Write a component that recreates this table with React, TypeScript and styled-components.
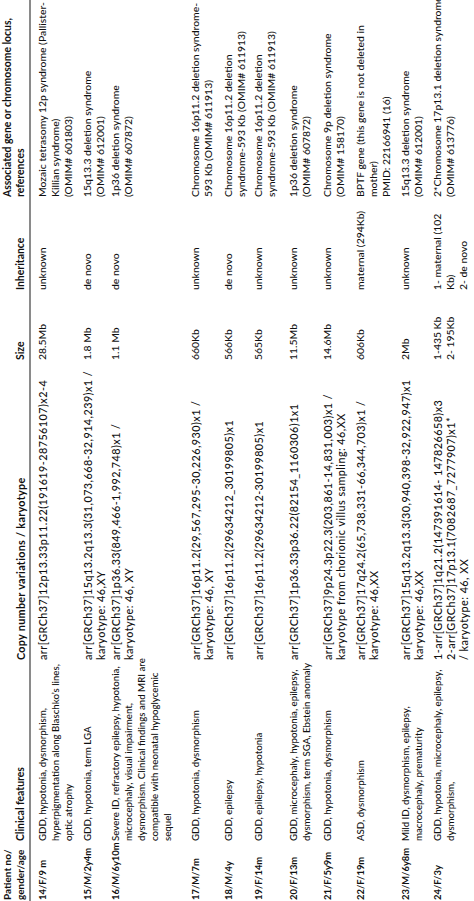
import React from "react";
import styled, { createGlobalStyle } from "styled-components";

const GlobalStyle = createGlobalStyle`
  html, body {
    margin: 0;
    padding: 0;
    background: #ffffff;
  }
`;

const Page = styled.div`
  width: 474px;
  height: 901px;
  overflow: hidden;
  background: #ffffff;
`;

// the table is printed sideways: laid out upright, then turned a quarter to the left
const Sideways = styled.div`
  width: 901px;
  height: 474px;
  transform-origin: 0 0;
  transform: translateY(901px) rotate(-90deg);
  font-family: Lato, "Liberation Sans", sans-serif;
  font-size: 10.4px;
  font-weight: 500;
  line-height: 13px;
  color: #111111;
`;

const Row = styled.div<{ $h?: number; $pad?: number; $head?: boolean }>`
  display: grid;
  grid-template-columns: 60px 181px 300px 70px 93px 320px;
  box-sizing: border-box;
  height: ${(p) => (p.$h ? `${p.$h}px` : "auto")};
  padding-top: ${(p) => p.$pad ?? 2}px;
  border-bottom: ${(p) => (p.$head ? "2px solid #8a8a8a" : "none")};
`;

const Cell = styled.div<{ $size?: number; $track?: number }>`
  white-space: nowrap;
  font-size: ${(p) => p.$size ?? 10.4}px;
  letter-spacing: ${(p) => p.$track ?? 0}px;
`;

const IdCell = styled(Cell)`
  font-weight: 700;
  padding-left: 1px;
`;

const HeadCell = styled(Cell)`
  font-weight: 700;
  align-self: end;
  padding-bottom: 2px;
`;

type Entry = {
  id: string;
  clin: string[];
  cnv: string[];
  size: string[];
  inh: string[];
  assoc: string[];
  h?: number;
  pad?: number;
};

const rows: Entry[] = [
  {
    id: "14/F/9 m",
    clin: ["GDD, hypotonia, dysmorphism,", "hyperpigmentation along Blaschko\u2019s lines,", "optic atrophy"],
    cnv: ["arr[GRCh37]12p13.33p11.22(191619-28756107)x2-4"],
    size: ["28.5Mb"],
    inh: ["unknown"],
    assoc: ["Mozaic tetrasomy 12p syndrome (Pallister-", "Killian syndrome)", "(OMIM# 601803)"],
    h: 47.5,
    pad: 4.5,
  },
  {
    id: "15/M/2y4m",
    clin: ["GDD, hypotonia, term LGA"],
    cnv: ["arr[GRCh37]15q13.2q13.3(31,073,668-32,914,239)x1 /", "karyotype: 46,XY"],
    size: ["1.8 Mb"],
    inh: ["de novo"],
    assoc: ["15q13.3 deletion syndrome", "(OMIM# 612001)"],
    h: 28,
  },
  {
    id: "16/M/6y10m",
    clin: [
      "Severe ID, refractory epilepsy, hypotonia,",
      "microcephaly, visual impairment,",
      "dysmorphism. Clinical findings and MRI are",
      "compatible with neonatal hypoglycemic",
      "sequel",
    ],
    cnv: ["arr[GRCh37]1p36.33(849,466-1,992,748)x1 /", "karyotype: 46, XY"],
    size: ["1.1 Mb"],
    inh: ["de novo"],
    assoc: ["1p36 deletion syndrome", "(OMIM# 607872)"],
    h: 80,
  },
  {
    id: "17/M/7m",
    clin: ["GDD, hypotonia, dysmorphism"],
    cnv: ["arr[GRCh37]16p11.2(29,567,295-30,226,930)x1 /", "karyotype: 46, XY"],
    size: ["660Kb"],
    inh: ["unknown"],
    assoc: ["Chromosome 16p11.2 deletion syndrome-", "593 Kb (OMIM# 611913)"],
    h: 33,
  },
  {
    id: "18/M/4y",
    clin: ["GDD, epilepsy"],
    cnv: ["arr[GRCh37]16p11.2(29634212_30199805)x1"],
    size: ["566Kb"],
    inh: ["de novo"],
    assoc: ["Chromosome 16p11.2 deletion", "syndrome-593 Kb (OMIM# 611913)"],
    h: 30,
  },
  {
    id: "19/F/14m",
    clin: ["GDD, epilepsy, hypotonia"],
    cnv: ["arr[GRCh37]16p11.2(29634212-30199805)x1"],
    size: ["565Kb"],
    inh: ["unknown"],
    assoc: ["Chromosome 16p11.2 deletion", "syndrome-593 Kb (OMIM# 611913)"],
    h: 35,
  },
  {
    id: "20/F/13m",
    clin: ["GDD, microcephaly, hypotonia, epilepsy,", "dysmorphism, term SGA, Ebstein anomaly"],
    cnv: ["arr[GRCh37]1p36.33p36.22(82154_1160306)1x1"],
    size: ["11.5Mb"],
    inh: ["unknown"],
    assoc: ["1p36 deletion syndrome", "(OMIM# 607872)"],
    h: 34,
  },
  {
    id: "21/F/5y9m",
    clin: ["GDD, hypotonia, dysmorphism"],
    cnv: ["arr[GRCh37]9p24.3p22.3(203,861-14,831,003)x1 /", "karyotype from chorionic villus sampling: 46,XX"],
    size: ["14.6Mb"],
    inh: ["unknown"],
    assoc: ["Chromosome 9p deletion syndrome", "(OMIM# 158170)"],
    h: 33,
  },
  {
    id: "22/F/19m",
    clin: ["ASD, dysmorphism"],
    cnv: ["arr[GRCh37]17q24.2(65,738,331-66,344,703)x1 /", "karyotype: 46,XX"],
    size: ["606Kb"],
    inh: ["maternal (294Kb)"],
    assoc: ["BPTF gene (this gene is not deleted in", "mother)", "PMID: 22166941 (16)"],
    h: 45,
  },
  {
    id: "23/M/6y8m",
    clin: ["Mild ID, dysmorphism, epilepsy,", "macrocephaly, prematurity"],
    cnv: ["arr[GRCh37]15q13.2q13.3(30,940,398-32,922,947)x1", "karyotype: 46,XX"],
    size: ["2Mb"],
    inh: ["unknown"],
    assoc: ["15q13.3 deletion syndrome", "(OMIM# 612001)"],
    h: 32,
  },
  {
    id: "24/F/3y",
    clin: ["GDD, hypotonia, microcephaly, epilepsy,", "dysmorphism,"],
    cnv: [
      "1-arr[GRCh37]1q21.2(147391614- 147826658)x3",
      "2-arr[GRCh37]17p13.1(7082687_7277907)x1*",
      "/ karyotype: 46, XX",
    ],
    size: ["1-435 Kb", "2- 195Kb"],
    inh: ["1- maternal (102", "Kb)", "2- de novo"],
    assoc: ["2*Chromosome 17p13.1 deletion syndrome", "(OMIM# 613776)"],
  },
];

const Lines = ({ items }: { items: string[] }) => (
  <>
    {items.map((t, i) => (
      <React.Fragment key={i}>
        {i > 0 && <br />}
        {t}
      </React.Fragment>
    ))}
  </>
);

export default function App() {
  return (
    <Page>
      <GlobalStyle />
      <Sideways>
        <Row $h={31} $pad={0} $head>
          <HeadCell $size={10} style={{ paddingLeft: 1 }}>
            Patient no/
            <br />
            gender/age
          </HeadCell>
          <HeadCell>Clinical features</HeadCell>
          <HeadCell $size={10.8} $track={0.3}>
            Copy number variations / karyotype
          </HeadCell>
          <HeadCell>Size</HeadCell>
          <HeadCell>Inheritance</HeadCell>
          <HeadCell>
            Associated gene or chromosome locus,
            <br />
            references
          </HeadCell>
        </Row>
        {rows.map((r) => (
          <Row key={r.id} $h={r.h} $pad={r.pad}>
            <IdCell $size={9.4}>{r.id}</IdCell>
            <Cell $size={9.7}>
              <Lines items={r.clin} />
            </Cell>
            <Cell $size={10.8} $track={0.45}>
              <Lines items={r.cnv} />
            </Cell>
            <Cell>
              <Lines items={r.size} />
            </Cell>
            <Cell>
              <Lines items={r.inh} />
            </Cell>
            <Cell>
              <Lines items={r.assoc} />
            </Cell>
          </Row>
        ))}
      </Sideways>
    </Page>
  );
}
